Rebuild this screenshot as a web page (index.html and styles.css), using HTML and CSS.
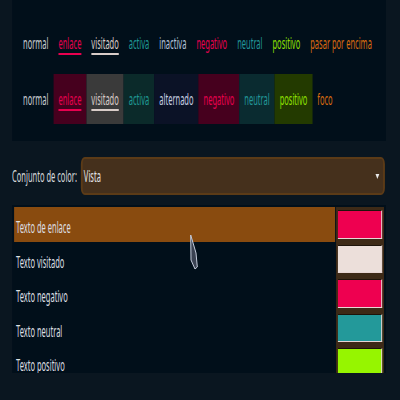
FILE: index.html
```html
<!DOCTYPE html>
<html lang="es">
<head>
<meta charset="utf-8">
<title>Colores</title>
<link rel="stylesheet" href="styles.css">
</head>
<body>
<div class="viewport">
<div class="stage">
  <div class="preview">
    <div class="prow">
      <span class="it c-normal">normal</span>
      <span class="it c-link u">enlace</span>
      <span class="it c-visited u">visitado</span>
      <span class="it c-active">activa</span>
      <span class="it c-inactive">inactiva</span>
      <span class="it c-neg">negativo</span>
      <span class="it c-neu">neutral</span>
      <span class="it c-pos">positivo</span>
      <span class="it c-hover">pasar por encima</span>
    </div>
    <div class="prow">
      <span class="it c-normal">normal</span>
      <span class="it c-link u b-link">enlace</span>
      <span class="it c-visited u b-visited">visitado</span>
      <span class="it c-active b-active">activa</span>
      <span class="it c-alt b-alt">alternado</span>
      <span class="it c-neg b-neg">negativo</span>
      <span class="it c-neu b-neu">neutral</span>
      <span class="it c-pos b-pos">positivo</span>
      <span class="it c-hover">foco</span>
    </div>
  </div>
  <div class="combo-row">
    <span class="label">Conjunto de color:</span>
    <div class="combo"><span>Vista</span><span class="arrow"></span></div>
  </div>
  <div class="list">
    <div class="row"><div class="name sel">Texto de enlace</div><div class="sw"><div class="fill s-link"></div></div></div>
    <div class="row"><div class="name">Texto visitado</div><div class="sw"><div class="fill s-visited"></div></div></div>
    <div class="row"><div class="name">Texto negativo</div><div class="sw"><div class="fill s-neg"></div></div></div>
    <div class="row"><div class="name">Texto neutral</div><div class="sw"><div class="fill s-neu"></div></div></div>
    <div class="row"><div class="name">Texto positivo</div><div class="sw"><div class="fill s-pos"></div></div></div>
  </div>
</div>
</div>
<svg class="cursor" width="14" height="40" viewBox="0 0 14 40"><polygon points="4.7,3 10,21 11.3,35 9,37 5,28" fill="#3a4252" stroke="#c4ccdc" stroke-width="1"/></svg>
</body>
</html>
```
FILE: styles.css
```css
:root { --k: 2.1277; }
html, body { margin: 0; padding: 0; }
body {
  width: 400px; height: 400px; overflow: hidden; position: relative;
  background: #0a1620;
  font-family: "Noto Sans", "DejaVu Sans", sans-serif;
  font-size: 16px;
}
.viewport { width: 400px; height: 400px; overflow: hidden; }
.stage {
  width: calc(400px * var(--k));
  height: 400px;
  box-sizing: border-box;
  padding-left: calc(12px * var(--k));
  padding-right: calc(14px * var(--k));
  transform: scaleX(0.47);
  transform-origin: 0 0;
}
.preview {
  background: #010f1a;
  padding: 18px 0 17px calc(6px * var(--k));
  display: flex; flex-direction: column; gap: 6px;
}
.prow { display: flex; height: 50px; }
.it { padding: 0 calc(5px * var(--k)); line-height: 50px; white-space: nowrap; }
.u { text-decoration: underline; text-decoration-thickness: 2px; text-underline-offset: 4px; }
.c-normal { color: #c9cdd2; }
.c-link { color: #e8004f; }
.c-visited { color: #d8ccc8; }
.c-active { color: #1f9a95; }
.c-inactive { color: #b3c2da; }
.c-alt { color: #c6cfe2; }
.c-neg { color: #e8004f; }
.c-neu { color: #22989a; }
.c-pos { color: #8fe000; }
.c-hover { color: #dc6c10; }
.b-link { background: #46001e; }
.b-visited { background: #3a3a3a; }
.b-active { background: #0b2a2a; }
.b-alt { background: #0b1226; }
.b-neg { background: #46001e; }
.b-neu { background: #0a2b30; }
.b-pos { background: #233a00; }

.combo-row {
  display: flex; align-items: center;
  height: 38px; margin-top: 16px; margin-bottom: 10px;
}
.label { color: #d8dadc; margin-right: calc(4px * var(--k)); white-space: nowrap; }
.combo {
  flex: 1; height: 38px; box-sizing: border-box;
  margin-right: calc(1px * var(--k));
  background: #45301c;
  border-style: solid; border-color: #5c3b17;
  border-width: 2px calc(2px * var(--k));
  border-radius: calc(4px * var(--k)) / 7px;
  display: flex; align-items: center; justify-content: space-between;
  padding: 0 calc(4px * var(--k)) 0 calc(1px * var(--k));
  color: #e4e4e4;
}
.arrow {
  width: 0; height: 0;
  border-left: calc(2px * var(--k)) solid transparent;
  border-right: calc(2px * var(--k)) solid transparent;
  border-top: 5px solid #e8e8e8;
}
.list {
  background: #010f1a;
  height: 168px; overflow: hidden; box-sizing: border-box;
  padding: 2px calc(2px * var(--k)) 0;
}
.row { display: flex; height: 34.5px; gap: calc(1px * var(--k)); }
.name {
  flex: 1; color: #dcdfe2; line-height: 29px;
  padding-top: 6px;
  padding-left: calc(2px * var(--k));
  white-space: nowrap;
}
.sel { background: #894b0f; }
.sw {
  width: calc(48px * var(--k)); box-sizing: border-box;
  background: #3d2a17;
  padding: 3px calc(2px * var(--k)) 3px;
  display: flex;
}
.fill {
  flex: 1;
  border-top: 1px solid #1e140a;
  border-bottom: 1px solid #e8d6d4;
  border-right: calc(1px * var(--k)) solid #e8d6d4;
}
.s-link { background: #ee0050; }
.s-visited { background: #ecdfda; }
.s-neg { background: #ee0050; }
.s-neu { background: #23999a; }
.s-pos { background: #96f500; }
.cursor { position: absolute; left: 186px; top: 232px; }
```
